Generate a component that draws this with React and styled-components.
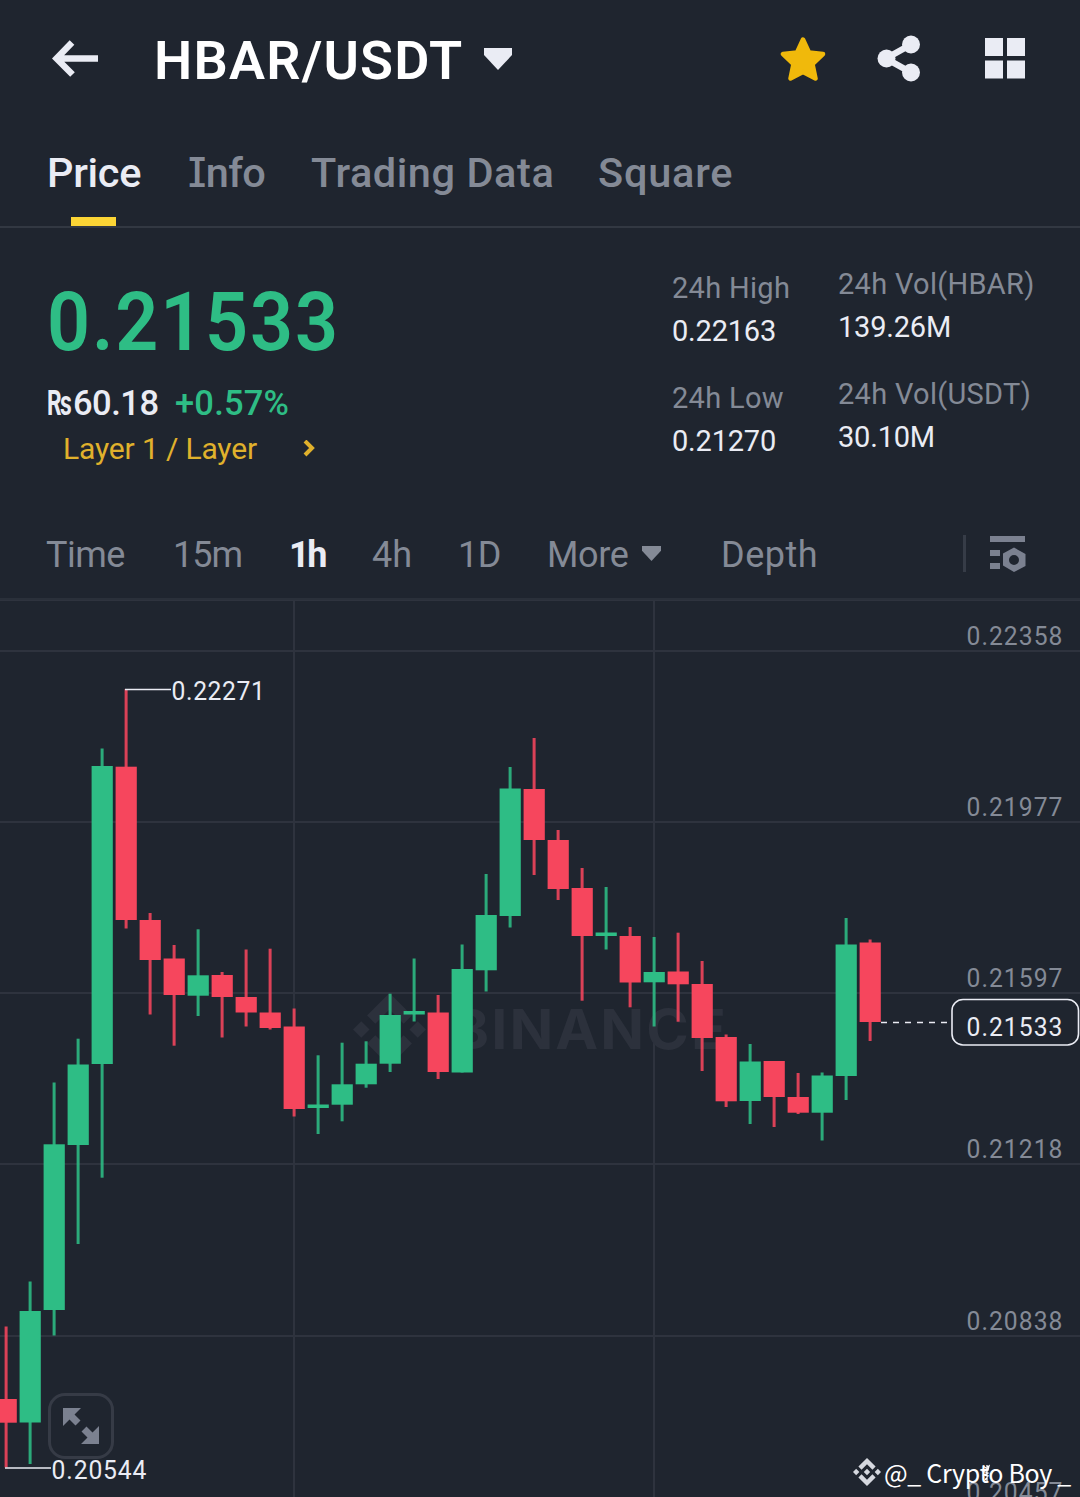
import React from "react";
import styled, { createGlobalStyle, css } from "styled-components";

const GlobalStyle = createGlobalStyle`
  * {
    box-sizing: border-box;
  }
  body {
    margin: 0;
    background: #1f252f;
    font-family: Roboto, "Liberation Sans", sans-serif;
    overflow: hidden;
  }
`;

const GREEN = "#2ebd85";
const RED = "#f6465d";
const GREY = "#848a96";
const LIGHT = "#eaecf4";

const Screen = styled.div`
  width: 1080px;
  height: 1497px;
  display: flex;
  flex-direction: column;
  overflow: hidden;
  background: #1f252f;
  color: ${LIGHT};
  white-space: nowrap;
`;

const Header = styled.header`
  display: flex;
  align-items: center;
  height: 118px;
  padding: 0 55px 0 52px;
`;

const Pair = styled.h1`
  margin: 3px 0 0 56px;
  width: 330px;
  font-size: 54px;
  font-weight: 600;
  letter-spacing: 1.2px;
  color: #fff;
`;

const HeaderIcons = styled.div`
  display: flex;
  align-items: center;
  margin-left: auto;
`;

const ShareIcon = styled.svg`
  margin-left: 51px;
`;

const GridIcon = styled.svg`
  margin-left: 64px;
`;

const Tabs = styled.nav`
  display: flex;
  height: 110px;
  padding-left: 47px;
  border-bottom: 2px solid #323842;
`;

const Tab = styled.div`
  position: relative;
  width: ${({ w }) => w}px;
  padding-top: 25px;
  font-size: 41.5px;
  line-height: 60px;
  font-weight: 500;
  letter-spacing: ${({ spacing }) => spacing || 0}px;
  color: ${GREY};
  ${({ active }) =>
    active &&
    css`
      color: ${LIGHT};
      &::after {
        content: "";
        position: absolute;
        left: 24px;
        bottom: 0;
        width: 45px;
        height: 9px;
        background: #fcd535;
      }
    `}
`;

// capital I with serifs
const SerifCap = styled.span`
  font-family: Inter, sans-serif;
  font-size: 40.5px;
  font-feature-settings: "cv08";
`;

const Summary = styled.section`
  display: flex;
  height: 282px;
  padding-left: 47px;
`;

const PriceColumn = styled.div`
  width: 625px;
  padding-top: 44px;
`;

const Price = styled.div`
  font-size: 82px;
  line-height: 100px;
  font-weight: 600;
  letter-spacing: 2px;
  transform: scaleX(0.92);
  transform-origin: left;
  color: ${GREEN};
`;

const Change = styled.div`
  display: flex;
  align-items: center;
  margin-top: 9px;
  font-size: 34.5px;
  line-height: 44px;
  font-weight: 500;
`;

const Rupee = styled.span`
  width: 26px;
  font-weight: 700;
  transform: scaleX(0.66);
  transform-origin: left;
`;

const Fiat = styled.span`
  width: 102px;
  letter-spacing: -0.5px;
`;

const Percent = styled.span`
  letter-spacing: 0.2px;
  color: ${GREEN};
`;

const Category = styled.div`
  display: flex;
  align-items: center;
  justify-content: space-between;
  width: 268px;
  margin-top: 3px;
  padding-left: 16px;
  font-size: 30px;
  line-height: 42px;
  letter-spacing: -0.15px;
  color: #e0b12c;
`;

const StatColumn = styled.div`
  display: flex;
  flex-direction: column;
  gap: 26px;
  width: ${({ w }) => w}px;
  padding-top: ${({ top }) => top}px;
`;

const Stat = styled.div`
  height: 84px;
`;

const StatLabel = styled.div`
  font-size: 29px;
  line-height: 42px;
  color: ${GREY};
  letter-spacing: 0.3px;
`;

const StatValue = styled.div`
  font-size: 29px;
  line-height: 44px;
  letter-spacing: -0.2px;
`;

const Intervals = styled.div`
  display: flex;
  align-items: center;
  height: 90px;
  padding: 2px 54px 0 46px;
  border-bottom: 2px solid #2a303a;
`;

const Interval = styled.div`
  display: flex;
  align-items: center;
  gap: 14px;
  width: ${({ w }) => w}px;
  font-size: 36px;
  font-weight: ${({ active }) => (active ? 700 : 400)};
  letter-spacing: ${({ spacing }) => spacing || 0}px;
  color: ${({ active }) => (active ? LIGHT : GREY)};
`;

const MoreCaret = styled.span`
  display: flex;
  padding-bottom: 4px;
`;

const Separator = styled.div`
  width: 3px;
  height: 37px;
  margin: 0 24px 4px auto;
  background: #363c47;
`;

const SettingsIcon = styled.svg`
  margin-bottom: 3px;
`;

const ChartArea = styled.div`
  position: relative;
  flex: 1;
`;

const ExpandButton = styled.button`
  position: absolute;
  left: 48px;
  top: 793px;
  width: 66px;
  height: 66px;
  padding: 0;
  border: 3px solid #363b46;
  border-radius: 17px;
  background: transparent;
  display: flex;
  align-items: center;
  justify-content: center;
`;

const Credit = styled.div`
  position: absolute;
  left: 853px;
  top: 852px;
  display: flex;
  align-items: center;
  gap: 3px;
  font-family: "Noto Sans CJK SC", sans-serif;
  font-size: 25px;
  line-height: 40px;
  letter-spacing: -0.3px;
  color: #fff;
`;

const Squiggle = styled.svg`
  position: absolute;
  left: 128px;
  top: 12px;
`;

// [up, high, body top, body bottom, low], one entry every 24px
const candles = [
  [0, 1326.5, 1399, 1422.7, 1467.5],
  [1, 1281.5, 1311, 1422.5, 1464],
  [1, 1082.5, 1144.3, 1310, 1335.5],
  [1, 1038.7, 1064.5, 1145, 1244],
  [1, 748.5, 766, 1064, 1177.7],
  [0, 689, 766.7, 920, 928.5],
  [0, 913, 920, 960, 1014.5],
  [0, 945, 958.5, 995, 1045.7],
  [1, 929.3, 975.3, 995.7, 1016],
  [0, 972, 975, 997, 1037.5],
  [0, 949.5, 997, 1012.5, 1026.5],
  [0, 948.7, 1012.5, 1028, 1029.5],
  [0, 1008.5, 1026.5, 1109, 1116.5],
  [1, 1055.3, 1104.5, 1108, 1134],
  [1, 1042.7, 1084.3, 1104.7, 1121.3],
  [1, 1041.3, 1063.7, 1084.3, 1087.7],
  [1, 993.7, 1015, 1063.7, 1072],
  [1, 958.5, 1011, 1014.5, 1021.5],
  [0, 995, 1012.5, 1072, 1079],
  [1, 944.5, 969, 1072.5, 1072.5],
  [1, 874, 915, 970.3, 991.5],
  [1, 767, 788.5, 916, 927.5],
  [0, 738, 789, 840, 875],
  [0, 830, 840, 889, 900],
  [0, 868, 888, 936, 1000.7],
  [1, 887, 932.5, 936, 949.5],
  [0, 927, 936, 982.5, 1007.3],
  [1, 937, 972, 982.3, 1026.5],
  [0, 932.7, 971.5, 984.3, 1021.7],
  [0, 961, 984, 1038, 1071],
  [0, 1034.5, 1037, 1101.3, 1107],
  [1, 1044, 1061.5, 1101, 1124],
  [0, 1061, 1061, 1097, 1127],
  [0, 1073, 1097, 1112.7, 1114],
  [1, 1072.5, 1075.5, 1112.7, 1140.5],
  [1, 918, 944.5, 1076, 1100],
  [0, 939.5, 942.5, 1022, 1041],
];

const axis = [
  ["0.22358", 651],
  ["0.21977", 822],
  ["0.21597", 993],
  ["0.21218", 1164],
  ["0.20838", 1336],
  ["0.20457", 1507],
];

const DiamondLogo = ({ size, color, ...rest }) => (
  <svg width={size} height={size} viewBox="0 0 126.6 126.6" fill={color} {...rest}>
    <path d="M38.7 53.2 63.3 28.6 87.9 53.2 102.2 38.9 63.3 0 24.4 38.9z" />
    <path d="M0 63.3 14.3 49 28.6 63.3 14.3 77.6z" />
    <path d="M38.7 73.4 63.3 98 87.9 73.4 102.2 87.7 63.3 126.6 24.4 87.7z" />
    <path d="M98 63.3 112.3 49 126.6 63.3 112.3 77.6z" />
    <path d="M77.8 63.3 63.3 48.8 48.8 63.3 63.3 77.8z" />
  </svg>
);

const Caret = ({ width, height, color }) => (
  <svg width={width} height={height} viewBox="0 0 28 22" fill={color}>
    <path d="M0 0h28v7L14 22 0 7z" />
  </svg>
);

// digits are squeezed to a narrow DIN-like shape, then spaced out to w
const ChartNumber = ({ x, y, w, children }) => (
  <text transform={`translate(${x} ${y}) scale(0.95 1)`} textLength={w / 0.95}>
    {children}
  </text>
);

function Chart() {
  return (
    <svg width="1080" height="897" viewBox="0 600 1080 897" display="block">
      <g fill="#2e333e">
        <rect x="0" y="600" width="1080" height="1" />
        {axis.map(([label, y]) => (
          <rect key={label} x="0" y={y - 1} width="1080" height="2" />
        ))}
        <rect x="293" y="600" width="2" height="897" />
        <rect x="653" y="600" width="2" height="897" />
      </g>

      <DiamondLogo x="353" y="993" size={73} color="#2c313c" />
      <text
        x="451"
        y="1049"
        textLength="277"
        lengthAdjust="spacingAndGlyphs"
        fontFamily="Inter"
        fontSize="55"
        fontWeight="700"
        letterSpacing="2"
        fill="#2c313c"
      >
        BINANCE
      </text>

      {candles.map(([up, high, top, bottom, low], i) => {
        const x = 6.2 + i * 24;
        return (
          <g key={i} fill={up ? GREEN : RED}>
            <rect x={x - 1.6} y={high} width="3" height={low - high} opacity="0.88" />
            <rect x={x - 10.6} y={top} width="21.2" height={bottom - top} />
          </g>
        );
      })}

      <g stroke={LIGHT} strokeWidth="1.6" fill="none">
        <path d="M125 689.5h46M5 1468h46" />
        <path d="M881 1022.5h70" strokeDasharray="6 6" strokeWidth="1.5" />
        <rect x="952" y="999.5" width="126.5" height="45.5" rx="11" />
      </g>

      <g fontFamily="Roboto" fontSize="26" fill={GREY}>
        {axis.map(([label, y]) => (
          <ChartNumber key={label} x={966.5} y={y - 6.5} w={96}>
            {label}
          </ChartNumber>
        ))}
        <g fill={LIGHT}>
          <ChartNumber x={966.5} y={1035.5} w={96}>
            0.21533
          </ChartNumber>
          <ChartNumber x={171.5} y={699.5} w={93.500}>
            0.22271
          </ChartNumber>
          <ChartNumber x={51.5} y={1478.5} w={95}>
            0.20544
          </ChartNumber>
        </g>
      </g>
    </svg>
  );
}

export default function App() {
  return (
    <Screen>
      <GlobalStyle />
      <Header>
        <svg width="46" height="38" viewBox="0 0 46 38" fill="none" stroke={LIGHT} strokeWidth="6.5">
          <path d="M4.5 18.500H46M20 2.500 4.500 18.500l16 16" />
        </svg>
        <Pair>HBAR/USDT</Pair>
        <Caret width={28} height={22} color={LIGHT} />
        <HeaderIcons>
          <svg width="46" height="48" viewBox="0 0 46 48">
            <path
              d="M23 4.500 29 17.500 43 19 32.500 29 35.500 43.500 23 37 10.500 43.500 13.500 29 3 19 17 17.500z"
              fill="#f0b90b"
              stroke="#f0b90b"
              strokeWidth="4.500"
              strokeLinejoin="round"
            />
          </svg>
          <ShareIcon width="44" height="48" viewBox="0 0 44 48">
            <path d="M34 9.500 9 23.500l25 14" fill="none" stroke={LIGHT} strokeWidth="6.500" />
            <g fill={LIGHT}>
              <circle cx="9.500" cy="23.500" r="9" />
              <circle cx="34" cy="9.500" r="9" />
              <circle cx="34" cy="37.500" r="9" />
            </g>
          </ShareIcon>
          <GridIcon width="40" height="42" viewBox="0 0 40 42" fill={LIGHT}>
            <path d="M0 0h18v18H0zM22 0h18v18H22zM0 22.500h18v18H0zM22 22.500h18v18H22z" />
          </GridIcon>
        </HeaderIcons>
      </Header>

      <Tabs>
        <Tab w={141} active spacing={-0.3}>
          Price
        </Tab>
        <Tab w={123} spacing={-0.6}>
          <SerifCap>I</SerifCap>nfo
        </Tab>
        <Tab w={287} spacing={0.55}>
          Trading Data
        </Tab>
        <Tab w={150} spacing={0.8}>
          Square
        </Tab>
      </Tabs>

      <Summary>
        <PriceColumn>
          <Price>0.21533</Price>
          <Change>
            <Rupee>₨</Rupee>
            <Fiat>60.18</Fiat>
            <Percent>+0.57%</Percent>
          </Change>
          <Category>
            Layer 1 / Layer
            <svg width="12" height="18" viewBox="0 0 12 18" fill="none" stroke="#e0b12c" strokeWidth="4">
              <path d="M2 1l7 7-7 7" />
            </svg>
          </Category>
        </PriceColumn>
        <StatColumn w={166} top={39}>
          <Stat>
            <StatLabel>24h High</StatLabel>
            <StatValue>0.22163</StatValue>
          </Stat>
          <Stat>
            <StatLabel>24h Low</StatLabel>
            <StatValue>0.21270</StatValue>
          </Stat>
        </StatColumn>
        <StatColumn w={200} top={35}>
          <Stat>
            <StatLabel>24h Vol(HBAR)</StatLabel>
            <StatValue>139.26M</StatValue>
          </Stat>
          <Stat>
            <StatLabel>24h Vol(USDT)</StatLabel>
            <StatValue>30.10M</StatValue>
          </Stat>
        </StatColumn>
      </Summary>

      <Intervals>
        <Interval w={127} spacing={-0.5}>
          Time
        </Interval>
        <Interval w={116} spacing={-1}>
          15m
        </Interval>
        <Interval w={83} spacing={-2.5} active>
          1h
        </Interval>
        <Interval w={86}>4h</Interval>
        <Interval w={89} spacing={-0.5}>
          1D
        </Interval>
        <Interval w={174} spacing={-0.4}>
          More
          <MoreCaret>
            <Caret width={19} height={15} color={GREY} />
          </MoreCaret>
        </Interval>
        <Interval w={100} spacing={0.5}>
          Depth
        </Interval>
        <Separator />
        <SettingsIcon width="36" height="38" viewBox="0 0 36 38" fill="#7b8190">
          <path d="M0 1h35v6H0zM0 15h10v6H0zM0 28h10v6H0z" />
          <path
            fillRule="evenodd"
            d="M24 12.500l11.500 6.500v12L24 37l-11-6.500v-12zM24 20a5 5 0 1 0 0 10 5 5 0 0 0 0-10z"
          />
        </SettingsIcon>
      </Intervals>

      <ChartArea>
        <Chart />
        <ExpandButton>
          <svg width="38" height="38" viewBox="0 0 38 38" fill="#7b8190">
            <path d="M1 1h18l-6.500 6.500 6 6-5 5-6-6L1 19z" />
            <path d="M37 37H19l6.500-6.500-6-6 5-5 6 6L37 19z" />
          </svg>
        </ExpandButton>
        <Credit>
          <DiamondLogo size={28} color="#d5d8df" />
          <span>@_ Crypto Boy _</span>
          <Squiggle width="9" height="18" viewBox="0 0 9 18" fill="none" stroke="#fff" strokeWidth="1.3">
            <path d="M2 2l3 2 3-2-1 4-5 1 5 2-4 2 4 1-3 4M6 1v16" />
          </Squiggle>
        </Credit>
      </ChartArea>
    </Screen>
  );
}
